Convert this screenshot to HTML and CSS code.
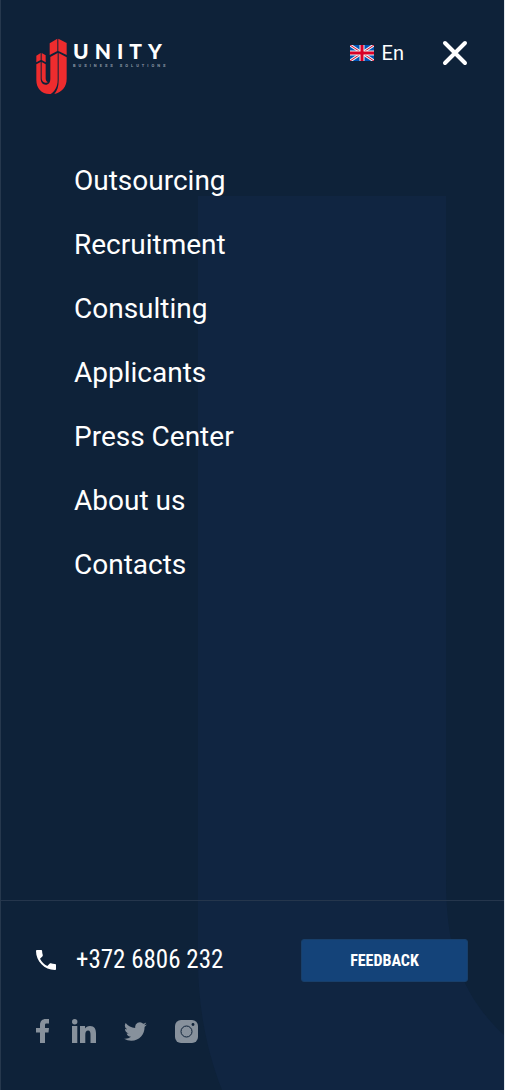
FILE: index.html
```
<!DOCTYPE html>
<html lang="en">
<head>
<meta charset="utf-8">
<meta name="viewport" content="width=device-width, initial-scale=1">
<title>Unity Business Solutions</title>
<link rel="stylesheet" href="styles.css">
</head>
<body>
<div class="menu">
  <svg class="backdrop" viewBox="0 0 505 1090" preserveAspectRatio="xMidYMax slice" aria-hidden="true">
    <path d="M198 196H446V880C446 954 464 998 505 1036V1090H222C207 1052 198 1008 198 960Z" fill="#102541"/>
  </svg>
  <header class="header">
    <a class="logo" href="#" aria-label="Unity Business Solutions">
      <svg class="logo-mark" viewBox="33 24 93 171" aria-hidden="true">
        <g fill="#ee2c2e">
          <path d="M74 40L97 26V63L74 75Z"/>
          <path d="M100 26L125 39V75L100 63Z"/>
          <path d="M34 77L47 69V90L34 97Z"/>
          <path d="M50 69L62 76V97L50 90Z"/>
          <path d="M34 103L47 96V145C47 157 53 164 62 164C71 164 76 157 76 146V81L98 69V150C98 171 89 184 77 192C51 194 34 176 34 150Z"/>
          <path d="M101 69L125 82V146C125 170 111 187 88 192C97 183 101 169 101 151Z"/>
          <path d="M50 96L62 103V145C62 152 65 156 69 157C63 161 50 157 50 144Z"/>
        </g>
      </svg>
      <span class="logo-text">
        <span class="logo-name">UNITY</span>
        <span class="logo-tag">BUSINESS SOLUTIONS</span>
      </span>
    </a>
    <div class="tools">
      <button class="language" type="button">
        <svg class="flag" viewBox="0 0 24 16" aria-hidden="true">
          <path fill="#0052b4" d="M0 0H24V16H0Z"/>
          <path stroke="#f0f0f0" stroke-width="3" d="M0 0L24 16M24 0L0 16"/>
          <path stroke="#d80027" stroke-width="1" d="M0 0L24 16M24 0L0 16"/>
          <path stroke="#f0f0f0" stroke-width="5" d="M12 0V16M0 8H24"/>
          <path stroke="#d80027" stroke-width="3" d="M12 0V16M0 8H24"/>
        </svg>
        <span>En</span>
      </button>
      <button class="close" type="button" aria-label="Close menu">
        <svg viewBox="0 0 26 26" aria-hidden="true"><path d="M3 3L23 23M23 3L3 23" stroke="#fff" stroke-width="4" stroke-linecap="round"/></svg>
      </button>
    </div>
  </header>
  <nav class="nav">
    <a href="#">Outsourcing</a>
    <a href="#">Recruitment</a>
    <a href="#">Consulting</a>
    <a href="#">Applicants</a>
    <a href="#">Press Center</a>
    <a href="#">About us</a>
    <a href="#">Contacts</a>
  </nav>
  <footer class="footer">
    <div class="contact">
      <a class="phone" href="tel:+3726806232">
        <svg viewBox="3 3 18 18" aria-hidden="true"><path fill="#fff" d="M6.6 10.800c1.400 2.800 3.800 5.100 6.600 6.600l2.200-2.200c.3-.3.7-.4 1-.2 1.100.4 2.300.6 3.600.6.600 0 1 .4 1 1V20c0 .6-.4 1-1 1C10.600 21 3 13.400 3 4c0-.6.4-1 1-1h3.500c.6 0 1 .4 1 1 0 1.300.2 2.500.6 3.600.1.300 0 .7-.2 1z"/></svg>
        <span>+372 6806 232</span>
      </a>
      <button class="feedback" type="button">FEEDBACK</button>
    </div>
    <div class="social">
      <a href="#" aria-label="Facebook"><svg width="13" height="24" viewBox="0 0 13 24" aria-hidden="true"><path d="M13 0V4.500H10.500C9.300 4.500 9 5 9 6.500V9H13L12.500 13.500H9V24H4V13.500H0V9H4V6C4 2 6.500 0 9.500 0Z"/></svg></a>
      <a href="#" aria-label="LinkedIn"><svg width="24" height="24" viewBox="0 0 24 24" aria-hidden="true"><circle cx="2.700" cy="2.700" r="2.700"/><path d="M0 7H5.300V24H0ZM8 7H13V9.500C14 8 15.500 7 18 7C22.500 7 24 10 24 14.500V24H18.500V16C18.500 13 18 11.500 16.200 11.500C14 11.500 13.300 13 13.300 16V24H8Z"/></svg></a>
      <a href="#" aria-label="Twitter"><svg width="23" height="19" viewBox="0 2 24 20" aria-hidden="true"><path d="M23.950 4.570a10 10 0 0 1-2.820.770 4.960 4.960 0 0 0 2.160-2.720c-.950.560-2 .960-3.130 1.190a4.920 4.920 0 0 0-8.380 4.480C7.690 8.090 4.070 6.130 1.640 3.160a4.920 4.920 0 0 0 1.520 6.570 4.900 4.900 0 0 1-2.230-.610v.060a4.920 4.920 0 0 0 3.950 4.830 5 5 0 0 1-2.210.080 4.940 4.940 0 0 0 4.600 3.420A9.870 9.870 0 0 1 0 19.540a13.990 13.990 0 0 0 7.550 2.210c9.050 0 14-7.500 14-13.980 0-.210 0-.420-.020-.630A9.940 9.940 0 0 0 23.950 4.570z"/></svg></a>
      <a href="#" aria-label="Instagram"><svg width="23" height="23" viewBox="0 0 23 23" aria-hidden="true"><rect width="23" height="23" rx="6"/><circle class="lens" cx="11.500" cy="11.500" r="5.500"/><circle class="dot" cx="18" cy="4.500" r="1.400"/></svg></a>
    </div>
  </footer>
</div>
</body>
</html>
```
FILE: styles.css
```
* { box-sizing: border-box; }

body {
  margin: 0;
  font-family: Roboto, "Liberation Sans", sans-serif;
  color: #fff;
  background: #0e2239;
}

a { color: inherit; text-decoration: none; }

button {
  padding: 0;
  border: 0;
  background: none;
  color: inherit;
  font: inherit;
  cursor: pointer;
}

svg { display: block; fill: none; }

.menu {
  position: relative;
  display: flex;
  flex-direction: column;
  min-height: 100vh;
  border-left: 1px solid #26384d;
  border-right: 1px solid #e4e8ec;
  overflow: hidden;
}

.backdrop {
  position: absolute;
  inset: 0 -1px 0 -1px;
  width: calc(100% + 2px);
  height: 100%;
}

.header, .nav, .footer { position: relative; }

.header {
  display: flex;
  justify-content: space-between;
  align-items: flex-start;
  padding: 38px 36px 0 35px;
}

.logo { display: flex; gap: 6px; }
.logo-mark { width: 31px; height: 57px; }
.logo-text { display: flex; flex-direction: column; }

.logo-name {
  font-size: 21px;
  line-height: 26px;
  font-family: Lato, sans-serif;
  font-weight: 900;
  letter-spacing: 6px;
}

.logo-tag {
  font-size: 4px;
  line-height: 4px;
  font-weight: 700;
  letter-spacing: 3px;
  color: #8c98a5;
}

.tools { display: flex; align-items: center; gap: 38px; padding-top: 2px; }
.language { display: flex; align-items: center; gap: 8px; font-size: 20px; line-height: 26px; }
.flag { width: 24px; height: 16px; }
.close svg { width: 26px; height: 26px; }

.nav {
  display: flex;
  flex-direction: column;
  align-items: flex-start;
  gap: 32px;
  padding: 70px 36px 40px 73px;
  font-size: 28px;
  line-height: 32px;
}

.footer {
  margin-top: auto;
  padding: 38px 36px 47px 35px;
  border-top: 1px solid #25364c;
}

.contact { display: flex; justify-content: space-between; align-items: center; }

.phone {
  display: flex;
  align-items: center;
  gap: 20px;
  padding-bottom: 2px;
  font-family: "Roboto Condensed", Roboto, sans-serif;
  font-size: 25px;
  line-height: 30px;
}

.phone svg { width: 20px; height: 20px; }

.feedback {
  width: 167px;
  height: 43px;
  border: 1px solid #183f6a;
  border-radius: 3px;
  background: #144379;
  font-family: "Roboto Condensed", Roboto, sans-serif;
  font-size: 16px;
  font-weight: 700;
}

.social { display: flex; align-items: center; gap: 28px; padding-top: 37px; }
.social a:first-child { margin-right: -5px; }
.social svg { fill: #87919c; }
.lens { fill: #87919c; stroke: #0e2239; stroke-width: 1; }
.dot { fill: #0e2239; }
```
